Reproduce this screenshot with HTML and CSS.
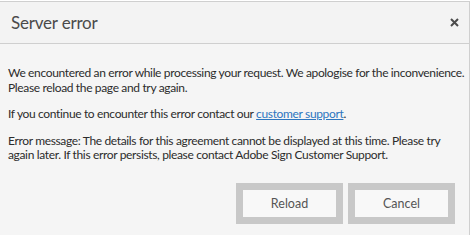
FILE: index.html
```html
<!DOCTYPE html>
<html>

<head>
    <meta name="viewport" content="width=device-width,initial-scale=1.0">
    <title>Server error</title>
    <link rel="stylesheet" href="styles.css">
</head>

<body>
    <div class="dialog">
        <div class="dialog-header">
            <div class="dialog-title">Server error</div>
            <button class="close-button" aria-label="Close">
                <svg width="9" height="9" viewBox="0 0 9 9">
                    <path d="M1 1 L8 8 M8 1 L1 8" stroke="#4b4b4b" stroke-width="2" fill="none" />
                </svg>
            </button>
        </div>
        <div class="dialog-body">
            <p>We encountered an error while processing your request. We apologise for the inconvenience. Please reload the page and try again.</p>
            <p>If you continue to encounter this error contact our <a href="#" class="link">customer support</a>.</p>
            <p class="error-message">Error message: The details for this agreement cannot be displayed at this time. Please try again later. If this error persists, please contact Adobe Sign Customer Support.</p>
        </div>
        <div class="dialog-footer">
            <button class="btn">Reload</button>
            <button class="btn">Cancel</button>
        </div>
    </div>
</body>

</html>
```

FILE: styles.css
```css
body {
    margin: 0;
    padding: 0;
    background: #fff;
    font-family: Lato, "Open Sans", Arial, sans-serif;
    color: #2c2c2c;
}

.dialog {
    margin-top: 1px;
    width: 470px;
    height: 234px;
    border: 1px solid #cfcfcf;
    border-left: none;
    border-bottom: none;
    background: #f5f5f5;
    box-sizing: border-box;
    display: flex;
    flex-direction: column;
}

.dialog-header {
    height: 42px;
    display: flex;
    align-items: center;
    justify-content: space-between;
    padding: 0 10px 0 11px;
    background: #f3f3f3;
    border-bottom: 1px solid #cfcfcf;
    box-sizing: border-box;
}

.dialog-title {
    font-size: 17px;
    letter-spacing: -0.2px;
    color: #4a4a4a;
}

.close-button {
    background: none;
    border: none;
    padding: 0;
    width: 9px;
    height: 9px;
    display: flex;
    cursor: pointer;
}

.dialog-body {
    padding: 22px 0 0 8px;
    font-size: 12px;
    letter-spacing: -0.35px;
    line-height: 14.5px;
    flex-grow: 1;
}

.dialog-body p {
    margin: 0 0 12px 0;
}

.error-message {
    max-width: 445px;
}

.link {
    color: #2d76c0;
}

.dialog-footer {
    display: flex;
    justify-content: flex-end;
    gap: 5px;
    padding: 0 14px 11px 0;
}

.btn {
    width: 107px;
    height: 41px;
    border: 7px solid #c8c8c8;
    background: #f8f8f8;
    color: #555;
    font-family: Lato, "Open Sans", Arial, sans-serif;
    font-size: 12.5px;
    cursor: pointer;
}
```
